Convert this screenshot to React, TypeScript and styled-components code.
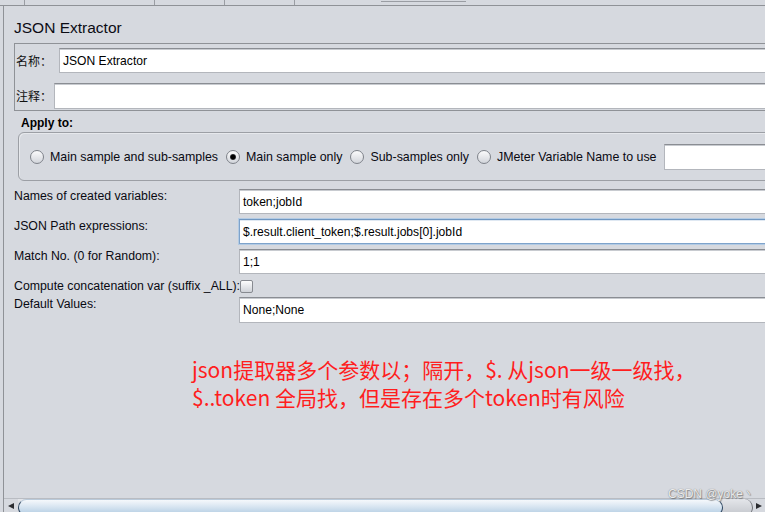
import React from "react";
import styled, { createGlobalStyle } from "styled-components";

const GlobalStyle = createGlobalStyle`
  html, body {
    margin: 0;
    padding: 0;
    background: #d6d9df;
  }
  body {
    font-family: "Liberation Sans", Arial, sans-serif;
    font-size: 12px;
    color: #000;
  }
  * {
    box-sizing: border-box;
  }
`;

const Page = styled.div`
  position: relative;
  width: 765px;
  height: 512px;
  overflow: hidden;
  background: #d6d9df;
`;

const TopStrip = styled.div`
  display: flex;
  height: 6px;
  border-bottom: 1px solid #8f9297;
`;

const HeaderCell = styled.div<{ $w: number }>`
  flex: none;
  width: ${(p) => p.$w}px;
  height: 5px;
  border-right: 1px solid #9a9da3;
`;

const HeaderTab = styled.div`
  flex: none;
  width: 85px;
  height: 2px;
  margin-left: 86px;
  border-bottom: 1px solid #9a9da3;
`;

const Main = styled.div`
  display: flex;
  flex-direction: column;
  height: 510px;
  margin-left: 3px;
  border-left: 1px solid #8f9297;
`;

const Content = styled.div`
  flex: 1;
  min-height: 0;
  padding-left: 10px;
`;

const Title = styled.div`
  margin-top: 12px;
  font-size: 15.5px;
  line-height: 20px;
  color: #0c0c14;
`;

const NamePanel = styled.div`
  display: flex;
  flex-direction: column;
  gap: 10px;
  margin: 5px -40px 0 0;
  padding: 4px 0 1px 1px;
  border: 1px solid #8f9297;
`;

const NameRow = styled.div<{ $gap: number }>`
  display: flex;
  align-items: center;
  gap: ${(p) => p.$gap}px;
`;

const CjkLabel = styled.span`
  flex: none;
  width: 36px;
  font-family: "Noto Sans CJK SC", "Liberation Sans", sans-serif;
  font-size: 12px;
  line-height: 14px;
  color: #111;
`;

const Field = styled.div<{ $h?: number; $focus?: boolean }>`
  flex: 1;
  display: flex;
  align-items: center;
  height: ${(p) => p.$h ?? 25}px;
  padding-left: 3px;
  background: #fff;
  border: 1px solid ${(p) => (p.$focus ? "#7ea3cb" : "#b3b6bc")};
  border-top-color: ${(p) => (p.$focus ? "#6f97c2" : "#8a8d93")};
  box-shadow: ${(p) =>
    p.$focus
      ? "0 0 0 1px #b3cbe4, inset 0 1px 0 #dfe8f2"
      : "inset 0 1px 0 #c8cbd0"};
  font-size: 12.1px;
  color: #000;
  white-space: nowrap;
`;

const ApplyLabel = styled.div`
  margin: 5px 0 0 7px;
  font-weight: bold;
  line-height: 14px;
`;

const ApplyBox = styled.div`
  display: flex;
  align-items: center;
  height: 49px;
  margin: 2px -40px 0 4px;
  padding-left: 11px;
  border: 1px solid #9c9fa5;
  border-radius: 6px;
  box-shadow: inset 1px 1px 0 #e6e8ec;
`;

const RadioItem = styled.label`
  display: flex;
  align-items: center;
  gap: 6px;
  margin-right: 8px;
  font-size: 12.4px;
  white-space: nowrap;
  color: #0a0a12;
`;

const RadioDot = styled.span<{ $on?: boolean }>`
  position: relative;
  flex: none;
  width: 14px;
  height: 14px;
  border-radius: 50%;
  border: 1px solid #7e828a;
  background: linear-gradient(#fbfbfc, #d2d5db);
  &::after {
    content: "";
    display: ${(p) => (p.$on ? "block" : "none")};
    position: absolute;
    left: 3px;
    top: 3px;
    width: 6px;
    height: 6px;
    border-radius: 50%;
    background: radial-gradient(circle, #000 45%, #4a4d52 75%, #9da0a6 100%);
  }
`;

const VarField = styled(Field)`
  margin-left: -1px;
`;

const Rows = styled.div`
  margin: 8px -40px 0 0;
`;

const Row = styled.div<{ $top: number; $h?: number }>`
  display: grid;
  grid-template-columns: 225px 1fr;
  align-items: start;
  margin-top: ${(p) => p.$top}px;
  height: ${(p) => p.$h ?? 25}px;
`;

const RowLabel = styled.span`
  font-size: 12.3px;
  line-height: 14px;
  color: #0a0a12;
  white-space: nowrap;
`;

const CheckBox = styled.span`
  width: 13px;
  height: 13px;
  margin: 1px 0 0 1px;
  border: 1px solid #878a90;
  border-radius: 2px;
  background: linear-gradient(#fdfdfd, #cfd2d8);
`;

const Note = styled.div`
  margin-top: 32px;
  padding-left: 178px;
  font-family: "Noto Sans CJK SC", sans-serif;
  font-size: 21px;
  line-height: 28px;
  color: #ff1e1e;
  white-space: nowrap;
`;

const ScrollBar = styled.div`
  display: flex;
  flex: none;
  height: 18px;
  border-top: 1px solid #b9bcc2;
`;

const ArrowBtn = styled.div<{ $w: number }>`
  flex: none;
  display: flex;
  justify-content: center;
  padding-top: 4px;
  width: ${(p) => p.$w}px;
`;

const Arrow = styled.span<{ $dir: "left" | "right" }>`
  width: 0;
  height: 0;
  border-top: 3.5px solid transparent;
  border-bottom: 3.5px solid transparent;
  ${(p) =>
    p.$dir === "left"
      ? "border-right: 6px solid #2a2c30;"
      : "border-left: 6px solid #2a2c30;"}
`;

const Track = styled.div`
  flex: 1;
  display: flex;
  border-radius: 0 9px 9px 0;
  border-right: 1px solid #6f7278;
  background: linear-gradient(#e4e6ea, #c2c5cb);
`;

const Thumb = styled.div`
  width: 705px;
  border-radius: 9px;
  border: 1px solid #b9c9d9;
  border-left-color: #2c4560;
  border-right-color: #2c4560;
  background: linear-gradient(#f5f8fb 0%, #dbe7f2 40%, #b0cbe2 100%);
`;

const Watermark = styled.div`
  position: absolute;
  left: 668px;
  top: 486px;
  font-size: 12px;
  color: #ececec;
  text-shadow: 0 0 1px #6e6e6e, 1px 1px 1px rgba(0, 0, 0, 0.35);
  white-space: nowrap;
`;

const radios = [
  { label: "Main sample and sub-samples", on: false },
  { label: "Main sample only", on: true },
  { label: "Sub-samples only", on: false },
  { label: "JMeter Variable Name to use", on: false },
];

export default function App() {
  return (
    <Page>
      <GlobalStyle />
      <TopStrip>
        <HeaderCell $w={25} />
        <HeaderCell $w={130} />
        <HeaderCell $w={70} />
        <HeaderCell $w={70} />
        <HeaderTab />
      </TopStrip>
      <Main>
        <Content>
          <Title>JSON Extractor</Title>
          <NamePanel>
            <NameRow $gap={7}>
              <CjkLabel>名称：</CjkLabel>
              <Field>JSON Extractor</Field>
            </NameRow>
            <NameRow $gap={2}>
              <CjkLabel>注释：</CjkLabel>
              <Field $h={26} />
            </NameRow>
          </NamePanel>

          <ApplyLabel>Apply to:</ApplyLabel>
          <ApplyBox>
            {radios.map((r) => (
              <RadioItem key={r.label}>
                <RadioDot $on={r.on} />
                {r.label}
              </RadioItem>
            ))}
            <VarField $h={26} />
          </ApplyBox>

          <Rows>
            <Row $top={0}>
              <RowLabel>Names of created variables:</RowLabel>
              <Field>token;jobId</Field>
            </Row>
            <Row $top={5}>
              <RowLabel>JSON Path expressions:</RowLabel>
              <Field $focus>$.result.client_token;$.result.jobs[0].jobId</Field>
            </Row>
            <Row $top={5}>
              <RowLabel>Match No. (0 for Random):</RowLabel>
              <Field>1;1</Field>
            </Row>
            <Row $top={5} $h={14}>
              <RowLabel>Compute concatenation var (suffix _ALL):</RowLabel>
              <CheckBox />
            </Row>
            <Row $top={4} $h={26}>
              <RowLabel>Default Values:</RowLabel>
              <Field $h={26}>None;None</Field>
            </Row>
          </Rows>

          <Note>
            <div>json提取器多个参数以；隔开，$. 从json一级一级找，</div>
            <div>$..token 全局找，但是存在多个token时有风险</div>
          </Note>
        </Content>
        <ScrollBar>
          <ArrowBtn $w={14}>
            <Arrow $dir="left" />
          </ArrowBtn>
          <Track>
            <Thumb />
          </Track>
          <ArrowBtn $w={12}>
            <Arrow $dir="right" />
          </ArrowBtn>
        </ScrollBar>
      </Main>
      <Watermark>CSDN @yoke丶</Watermark>
    </Page>
  );
}
